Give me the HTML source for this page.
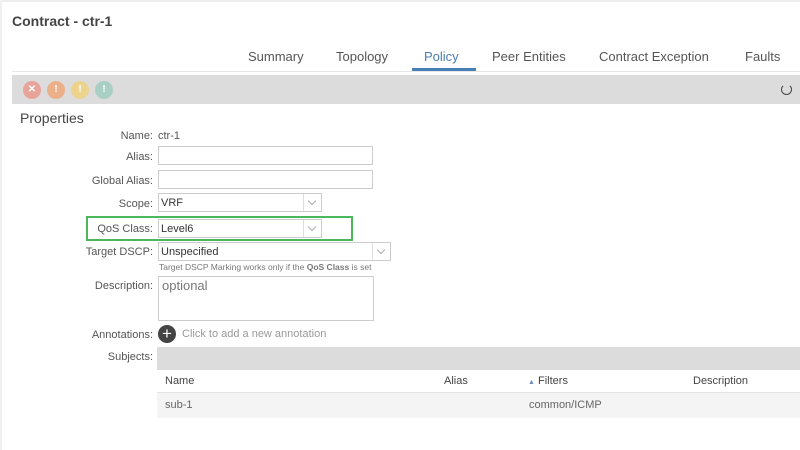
<!DOCTYPE html><html><head><style>
body{margin:0;width:800px;height:450px;background:#fff;font-family:"Liberation Sans",sans-serif;position:relative;overflow:hidden;color:#333}
.a{position:absolute}
.lbl{position:absolute;right:647px;font-size:11px;color:#555;text-align:right;white-space:nowrap;margin-top:1px}
.in{position:absolute;border:1px solid #ccc;background:#fff;box-sizing:border-box;font-size:11px;color:#333;padding:3px 2px}
.arr{position:absolute;top:0;bottom:0;right:0;width:17px;border-left:1px solid #ddd}
.arr:after{content:"";position:absolute;left:5px;top:4px;width:5px;height:5px;border-right:1px solid #aaa;border-bottom:1px solid #aaa;transform:rotate(45deg)}
.tab{position:absolute;top:49px;font-size:13px;color:#555}
.ic{position:absolute;top:81px;width:18px;height:18px;border-radius:50%;color:#fff;font-size:10px;font-weight:bold;text-align:center;line-height:18px}
</style></head><body>
<div class="a" style="left:0;top:0;width:800px;height:2px;background:#eee"></div>
<div class="a" style="left:0;top:0;width:2px;height:450px;background:#f0f0f0"></div>
<div class="a" style="left:12px;top:13px;font-size:14px;font-weight:bold;color:#444">Contract - ctr-1</div>
<div class="tab" style="left:248px">Summary</div>
<div class="tab" style="left:336px">Topology</div>
<div class="tab" style="left:424px;color:#4a7fb5">Policy</div>
<div class="tab" style="left:492px">Peer Entities</div>
<div class="tab" style="left:599px">Contract Exception</div>
<div class="tab" style="left:745px">Faults</div>
<div class="a" style="left:412px;top:68px;width:64px;height:3px;background:#4a7fb5"></div>
<div class="a" style="left:12px;top:71px;width:788px;height:1px;background:#e6e6e6"></div>
<div class="a" style="left:12px;top:75px;width:788px;height:29px;background:#dcdcdc"></div>
<div class="ic" style="left:23px;background:#e8a39a">✕</div>
<div class="ic" style="left:47px;background:#ebb08a">!</div>
<div class="ic" style="left:71px;background:#ecd38e">!</div>
<div class="ic" style="left:95px;background:#a9cfc4">!</div>
<div class="a" style="left:781px;top:84px;width:9px;height:9px;border:1.5px solid #444;border-radius:50%;border-top-color:transparent"></div>
<div class="a" style="left:20px;top:110px;font-size:14px;color:#444">Properties</div>
<div class="lbl" style="top:129px">Name:</div><div class="a" style="left:158px;top:130px;font-size:11px;color:#555">ctr-1</div>
<div class="lbl" style="top:150px">Alias:</div><div class="in" style="left:158px;top:146px;width:215px;height:19px"></div>
<div class="lbl" style="top:174px">Global Alias:</div><div class="in" style="left:158px;top:170px;width:215px;height:19px"></div>
<div class="lbl" style="top:197px">Scope:</div><div class="in" style="left:158px;top:193px;width:164px;height:19px">VRF<div class="arr"></div></div>
<div class="a" style="left:86px;top:216px;width:267px;height:25px;border:2px solid #4cb85c;box-sizing:border-box"></div>
<div class="lbl" style="top:222px">QoS Class:</div><div class="in" style="left:158px;top:219px;width:164px;height:19px">Level6<div class="arr"></div></div>
<div class="lbl" style="top:245px">Target DSCP:</div><div class="in" style="left:158px;top:242px;width:233px;height:19px">Unspecified<div class="arr"></div></div>
<div class="a" style="left:159px;top:262px;font-size:8.5px;color:#777">Target DSCP Marking works only if the <b>QoS Class</b> is set</div>
<div class="lbl" style="top:279px">Description:</div><div class="in" style="left:158px;top:276px;width:216px;height:45px;font-size:13px;color:#777;padding:1px 3px">optional</div>
<div class="lbl" style="top:328px">Annotations:</div>
<div class="a" style="left:158px;top:325px;width:18px;height:18px;border-radius:50%;background:#444;color:#fff;text-align:center;line-height:18px;font-size:17px">+</div>
<div class="a" style="left:182px;top:328px;font-size:11px;color:#999">Click to add a new annotation</div>
<div class="lbl" style="top:350px">Subjects:</div>
<div class="a" style="left:157px;top:347px;width:643px;height:23px;background:#dcdcdc"></div>
<div class="a" style="left:157px;top:392px;width:643px;height:1px;background:#e4e4e4"></div>
<div class="a" style="left:157px;top:393px;width:643px;height:25px;background:#f4f4f4"></div>
<div class="a" style="left:165px;top:375px;font-size:11px;color:#444">Name</div>
<div class="a" style="left:444px;top:375px;font-size:11px;color:#444">Alias</div>
<div class="a" style="left:528px;top:375px;font-size:11px;color:#444"><span style="color:#6a8fc0;font-size:7px">▲</span> Filters</div>
<div class="a" style="left:693px;top:375px;font-size:11px;color:#444">Description</div>
<div class="a" style="left:165px;top:399px;font-size:11px;color:#666">sub-1</div>
<div class="a" style="left:529px;top:399px;font-size:11px;color:#666">common/ICMP</div>
</body></html>
